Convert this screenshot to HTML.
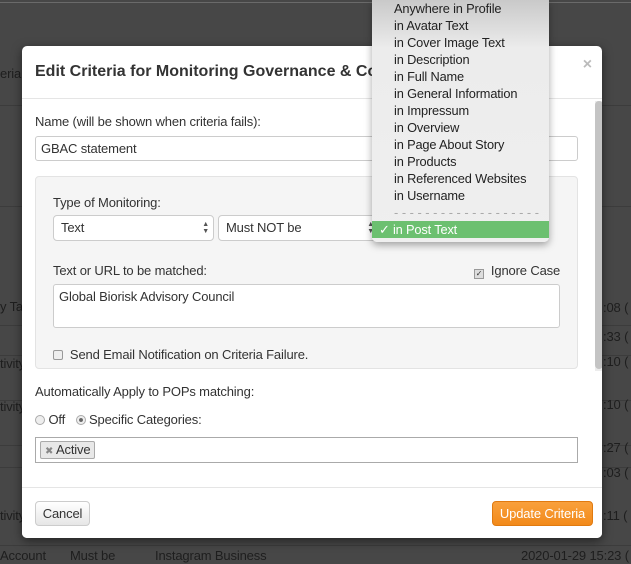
<!DOCTYPE html>
<html><head><style>
*{box-sizing:border-box}
body{margin:0;width:631px;height:564px;overflow:hidden;background:#474747;font-family:"Liberation Sans",sans-serif;font-size:13px;color:#333;letter-spacing:-0.15px;position:relative}
.bg{position:absolute;color:#1e1e1e;font-size:13px}
.line{position:absolute;left:0;right:0;height:1px;background:#3c3c3c}
.modal{position:absolute;left:22px;top:46px;width:580px;height:492px;background:#fff;border-radius:5px;box-shadow:0 3px 10px rgba(0,0,0,.5);overflow:hidden}
.hdr{position:absolute;left:0;top:0;right:0;height:53px;border-bottom:1px solid #e5e5e5}
.hdr h3{margin:0;position:absolute;left:13px;top:17px;font-size:16px;font-weight:bold;color:#333;letter-spacing:0}
.x{position:absolute;right:10px;top:10px;color:#bbb;font-size:16px;font-weight:bold}
.a{position:absolute}
.inp{position:absolute;border:1px solid #ccc;border-radius:3px;background:#fff;padding-left:5px}
.well{position:absolute;left:13px;top:130px;width:543px;height:193px;background:#f5f5f5;border:1px solid #e3e3e3;border-radius:4px}
.sel{position:absolute;border:1px solid #ccc;border-radius:4px;background:#fff;height:26px;line-height:24px;padding-left:7px}
.arr{position:absolute;right:4px;top:5px;font-size:7px;line-height:7px;color:#555}
.foot{position:absolute;left:0;right:0;bottom:0;height:51px;border-top:1px solid #e5e5e5;background:#fff}
.btn{position:absolute;border-radius:4px;height:25px;line-height:23px;text-align:center}
.dd{position:absolute;left:372px;top:0;width:177px;height:242px;background:linear-gradient(#c9c9c9,#ececec 20%,#efefef);border-radius:0 0 5px 5px;box-shadow:0 3px 8px rgba(0,0,0,.35);font-size:12.8px;color:#222}
.dd div{position:absolute;left:22px;height:17px;line-height:17px}
</style></head><body>
<div class="line" style="top:2px;background:#6a6a6a"></div>
<div class="line" style="top:105px"></div>
<div class="line" style="top:206px"></div>
<div class="line" style="top:325px"></div>
<div class="line" style="top:355px"></div>
<div class="line" style="top:400px"></div>
<div class="line" style="top:445px"></div>
<div class="line" style="top:467px"></div>
<div class="line" style="top:545px"></div>
<div class="bg" style="left:0;top:66px">eria</div>
<div class="bg" style="left:0;top:299px">y Ta</div>
<div class="bg" style="left:0;top:356px">tivity</div>
<div class="bg" style="left:0;top:399px">tivity</div>
<div class="bg" style="left:0;top:508px">tivity</div>
<div class="bg" style="left:0;top:548px">Account</div>
<div class="bg" style="left:70px;top:548px">Must be</div>
<div class="bg" style="left:155px;top:548px">Instagram Business</div>
<div class="bg" style="left:521px;top:548px">2020-01-29 15:23 (</div>
<div class="bg" style="left:603px;top:300px">:08 (</div>
<div class="bg" style="left:603px;top:329px">:33 (</div>
<div class="bg" style="left:603px;top:354px">:10 (</div>
<div class="bg" style="left:603px;top:397px">:10 (</div>
<div class="bg" style="left:603px;top:440px">:27 (</div>
<div class="bg" style="left:603px;top:465px">:03 (</div>
<div class="bg" style="left:603px;top:508px">:11 (</div>

<div class="modal">
<div class="hdr"><h3>Edit Criteria for Monitoring Governance &amp; Co</h3><span class="x">×</span></div>
<div class="a" style="left:573px;top:55px;width:8px;height:270px;background:#ececec"></div>
<div class="a" style="left:573px;top:55px;width:8px;height:268px;background:#c4c4c4;border-radius:4px"></div>
<div class="a" style="left:13px;top:68px">Name (will be shown when criteria fails):</div>
<div class="inp" style="left:13px;top:90px;width:543px;height:25px;line-height:23px">GBAC statement</div>
<div class="well">
 <div class="a" style="left:17px;top:18px">Type of Monitoring:</div>
 <div class="sel" style="left:17px;top:38px;width:161px">Text<span class="arr">▲<br>▼</span></div>
 <div class="sel" style="left:182px;top:38px;width:161px">Must NOT be<span class="arr">▲<br>▼</span></div>
 <div class="a" style="left:17px;top:86px">Text or URL to be matched:</div>
 <div class="a" style="left:438px;top:86px"><span style="display:inline-block;width:10px;height:10px;border:1px solid #999;background:#ddd;font-size:8px;line-height:8px;text-align:center;vertical-align:-1px">✓</span>&nbsp; Ignore Case</div>
 <div class="inp" style="left:17px;top:107px;width:507px;height:44px;padding-top:4px">Global Biorisk Advisory Council</div>
 <div class="a" style="left:17px;top:170px"><span style="display:inline-block;width:10px;height:10px;border:1px solid #999;background:#eee;border-radius:2px;vertical-align:-1px"></span>&nbsp; Send Email Notification on Criteria Failure.</div>
</div>
<div class="a" style="left:13px;top:338px">Automatically Apply to POPs matching:</div>
<div class="a" style="left:13px;top:366px"><span style="display:inline-block;width:10px;height:10px;border:1px solid #aaa;border-radius:50%;background:#eee;vertical-align:-1px"></span> Off &nbsp;&nbsp;<span style="display:inline-block;width:10px;height:10px;border:1px solid #aaa;border-radius:50%;background:radial-gradient(#666 30%,#eee 40%);vertical-align:-1px"></span> Specific Categories:</div>
<div class="a" style="left:13px;top:391px;width:543px;height:26px;border:1px solid #aaa">
 <div class="a" style="left:4px;top:3px;height:18px;line-height:16px;padding:0 4px;border:1px solid #aaa;border-radius:2px;background:#e8e8e8"><span style="color:#888;font-size:10px">✖</span> Active</div>
</div>
<div class="foot">
 <div class="btn" style="left:13px;top:13px;width:55px;border:1px solid #ccc;background:linear-gradient(#fff,#e6e6e6)">Cancel</div>
 <div class="btn" style="left:470px;top:13px;width:101px;border:1px solid #e07a10;background:linear-gradient(#f9a03c,#f28a1a);color:#fff">Update Criteria</div>
</div>
</div>

<div class="dd">
<div style="top:0">Anywhere in Profile</div>
<div style="top:17px">in Avatar Text</div>
<div style="top:34px">in Cover Image Text</div>
<div style="top:51px">in Description</div>
<div style="top:68px">in Full Name</div>
<div style="top:85px">in General Information</div>
<div style="top:102px">in Impressum</div>
<div style="top:119px">in Overview</div>
<div style="top:136px">in Page About Story</div>
<div style="top:153px">in Products</div>
<div style="top:170px">in Referenced Websites</div>
<div style="top:187px">in Username</div>
<div style="top:204px;color:#aaa;letter-spacing:0">- - - - - - - - - - - - - - - - - - -</div>
<div style="top:221px;left:0;width:177px;background:#6cc070;color:#fff;padding-left:7px">✓ in Post Text</div>
</div>
</body></html>
